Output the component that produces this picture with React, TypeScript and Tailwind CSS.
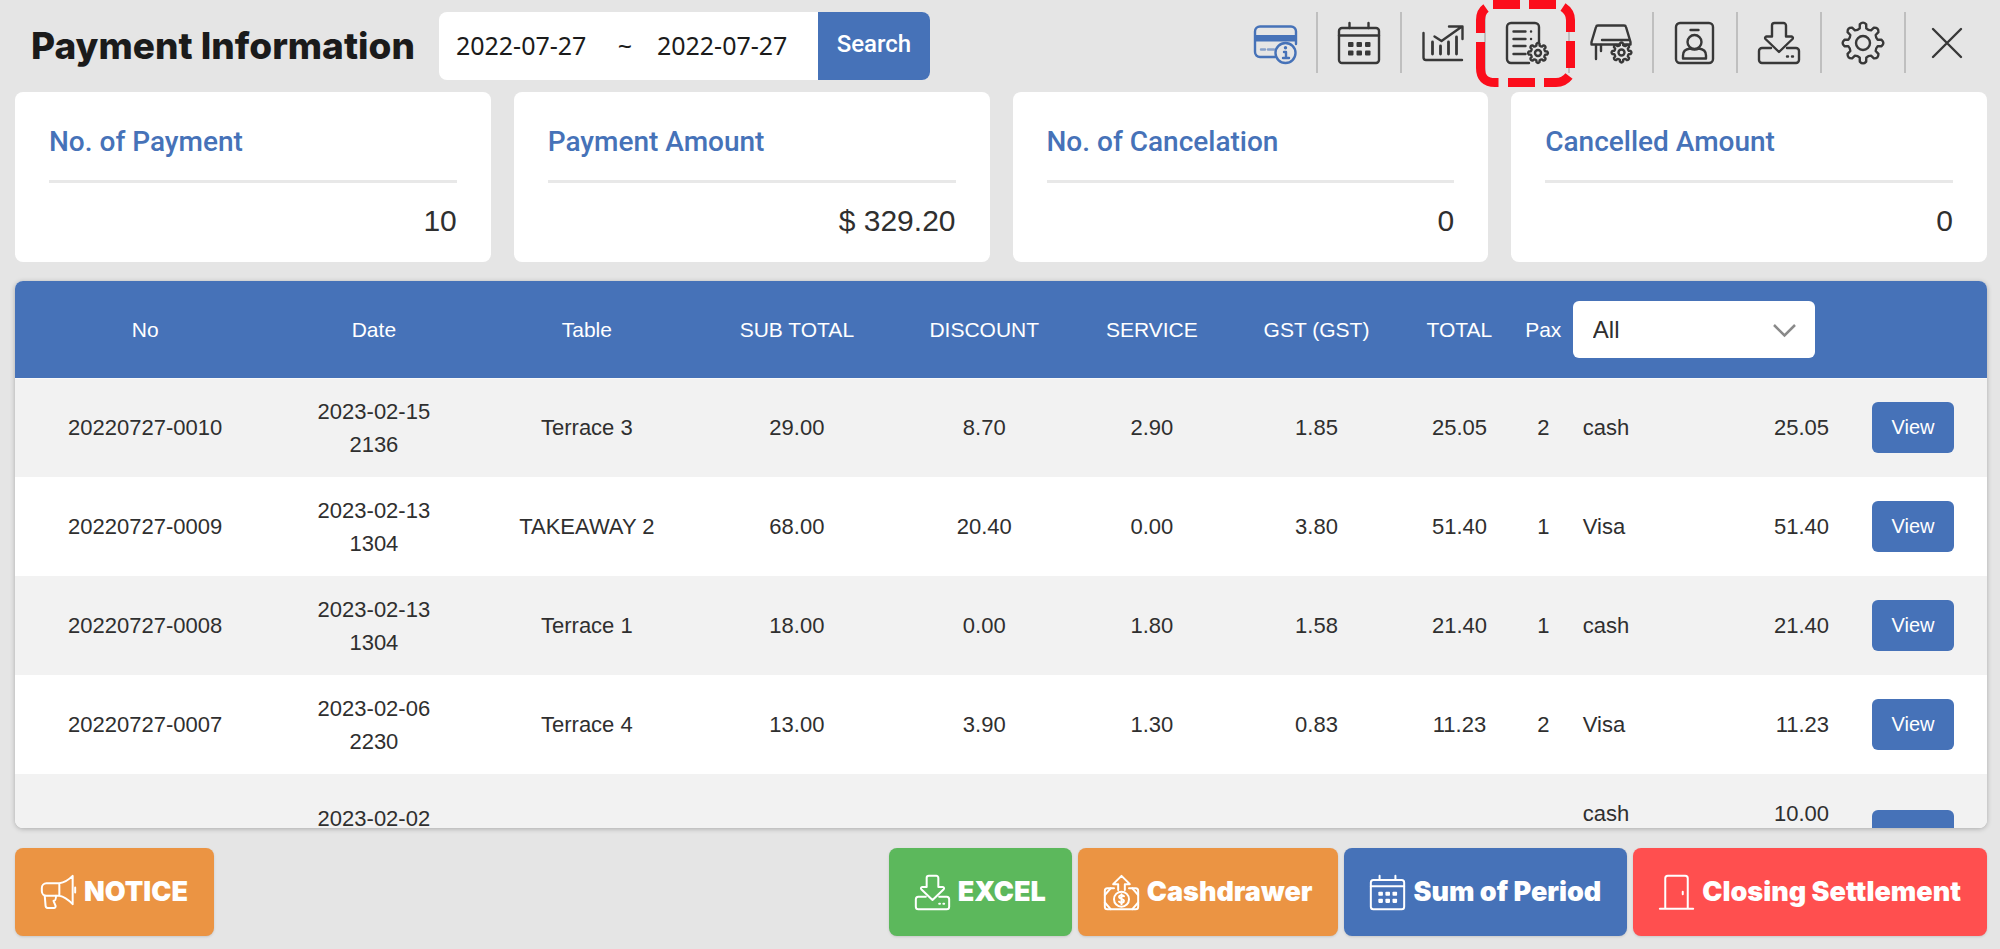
import { useState } from 'react';
import type { ReactNode } from 'react';

interface Payment {
  method: string;
  amount: string;
}

interface Order {
  no: string;
  date: string;
  time: string;
  table: string;
  subTotal: string;
  discount: string;
  service: string;
  gst: string;
  total: string;
  pax: number;
  payments: Payment[];
}

const summary = [
  { label: 'No. of Payment', value: '10' },
  { label: 'Payment Amount', value: '$ 329.20' },
  { label: 'No. of Cancelation', value: '0' },
  { label: 'Cancelled Amount', value: '0' },
];

const orders: Order[] = [
  { no: '20220727-0010', date: '2023-02-15', time: '2136', table: 'Terrace 3', subTotal: '29.00', discount: '8.70', service: '2.90', gst: '1.85', total: '25.05', pax: 2, payments: [{ method: 'cash', amount: '25.05' }] },
  { no: '20220727-0009', date: '2023-02-13', time: '1304', table: 'TAKEAWAY 2', subTotal: '68.00', discount: '20.40', service: '0.00', gst: '3.80', total: '51.40', pax: 1, payments: [{ method: 'Visa', amount: '51.40' }] },
  { no: '20220727-0008', date: '2023-02-13', time: '1304', table: 'Terrace 1', subTotal: '18.00', discount: '0.00', service: '1.80', gst: '1.58', total: '21.40', pax: 1, payments: [{ method: 'cash', amount: '21.40' }] },
  { no: '20220727-0007', date: '2023-02-06', time: '2230', table: 'Terrace 4', subTotal: '13.00', discount: '3.90', service: '1.30', gst: '0.83', total: '11.23', pax: 2, payments: [{ method: 'Visa', amount: '11.23' }] },
  { no: '', date: '2023-02-02', time: '', table: '', subTotal: '', discount: '', service: '', gst: '', total: '', pax: 0, payments: [{ method: 'cash', amount: '10.00' }, { method: '', amount: '' }] },
];

// Outline of a cog with eight rounded teeth
function gearPath(cx: number, cy: number, outer: number, inner: number) {
  const teeth = 8;
  const point = (r: number, a: number) => `${(cx + r * Math.cos(a)).toFixed(2)} ${(cy + r * Math.sin(a)).toFixed(2)}`;
  let d = '';
  for (let i = 0; i < teeth; i++) {
    const a = (i * 2 * Math.PI) / teeth - Math.PI / 2;
    d += `${i === 0 ? 'M' : 'L'}${point(inner, a - 0.22)}`;
    d += `L${point(outer * 0.92, a - 0.17)}`;
    d += `Q${point(outer * 1.08, a)} ${point(outer * 0.92, a + 0.17)}`;
    d += `L${point(inner, a + 0.22)}`;
    d += `Q${point(inner * 0.92, a + Math.PI / teeth)} ${point(inner, a + (2 * Math.PI) / teeth - 0.22)}`;
  }
  return d + 'Z';
}

function Icon({ children, className = 'size-[42px]' }: { children: ReactNode; className?: string }) {
  return (
    <svg
      className={className}
      viewBox="0 0 42 42"
      fill="none"
      stroke="currentColor"
      strokeWidth={2.4}
      strokeLinecap="round"
      strokeLinejoin="round"
      overflow="visible"
      aria-hidden="true"
    >
      {children}
    </svg>
  );
}

function CardIcon() {
  return (
    <Icon>
      <path d="M21 35H6a5 5 0 0 1-5-5V9.500a5 5 0 0 1 5-5h31a5 5 0 0 1 5 5V22" />
      <path d="M1 13h41v6.500H1z" fill="currentColor" stroke="none" />
      <path d="M7 27.500h4M14 27.500h6" strokeOpacity={0.6} />
      <circle cx="31.500" cy="31" r="10" fill="#e5e5e5" />
      <path d="M30 30h2v6M29 36h6" />
      <circle cx="31.500" cy="25.800" r="1.700" fill="currentColor" stroke="none" />
    </Icon>
  );
}

function CalendarIcon({ className }: { className?: string }) {
  return (
    <Icon className={className}>
      <rect x="1" y="6" width="40" height="35" rx="3" />
      <path d="M1 13.500h40M11.500 1v5M30.500 1v5" />
      <g fill="currentColor" stroke="none">
        <rect x="10" y="20" width="5.500" height="5" rx="1" />
        <rect x="18.500" y="20" width="5.500" height="5" rx="1" />
        <rect x="27" y="20" width="5.500" height="5" rx="1" />
        <rect x="10" y="28.500" width="5.500" height="5" rx="1" />
        <rect x="18.500" y="28.500" width="5.500" height="5" rx="1" />
        <rect x="27" y="28.500" width="5.500" height="5" rx="1" />
      </g>
    </Icon>
  );
}

function ChartIcon() {
  return (
    <Icon>
      <path d="M1.500 11v24.500a2.500 2.500 0 0 0 2.500 2.500h36" />
      <path d="M10.500 20v12M18.500 24v8M26.500 20v12M34.500 15v17" strokeWidth={2.8} />
      <path d="M12.500 14.500l7 4.500L40 4.500M27 4.500h13.500V17" />
    </Icon>
  );
}

function ListIcon() {
  return (
    <Icon>
      <path d="M23 41H5a4 4 0 0 1-4-4V5a4 4 0 0 1 4-4h24a4 4 0 0 1 4 4v17" />
      <path d="M7.500 9.500h12M7.500 17h12M7.500 24h12M7.500 32h12M25 9.500h.1M25 17h.1M25 24h.1" />
      <path d={gearPath(32, 31, 10, 7.5)} fill="#e5e5e5" />
      <circle cx="32" cy="31" r="3" />
    </Icon>
  );
}

function TableIcon() {
  return (
    <Icon>
      <path d="M1.500 20L6 5a2 2 0 0 1 2-1.500h26A2 2 0 0 1 36 5l4.500 15v2.500h-39z" />
      <path d="M12 18h27M6 23v14M11 23v6" />
      <path d={gearPath(31.5, 30.5, 10, 7.5)} fill="#e5e5e5" />
      <circle cx="31.500" cy="30.500" r="3" />
    </Icon>
  );
}

function BadgeIcon() {
  return (
    <Icon>
      <rect x="2" y="1" width="37" height="40" rx="4" />
      <path d="M16.500 8h8" />
      <circle cx="20.500" cy="20" r="7" />
      <path d="M9 36.500v-3c0-4 3-6.500 7-7 3 1.500 6 1.500 9 0 4 .5 7 3 7 7v3z" />
    </Icon>
  );
}

function DownloadIcon({ className }: { className?: string }) {
  return (
    <Icon className={className}>
      <path d="M13 26H4a3 3 0 0 0-3 3v9a3 3 0 0 0 3 3h34a3 3 0 0 0 3-3v-9a3 3 0 0 0-3-3h-9" />
      <path d="M14 14.500V3.500A2.500 2.500 0 0 1 16.500 1h9A2.500 2.500 0 0 1 28 3.500v11h5.500a1.500 1.500 0 0 1 1 2.500L21 30 7.500 17a1.500 1.500 0 0 1 1-2.500z" />
      <path d="M29 34.500h1M34 34.500h1" />
    </Icon>
  );
}

function GearIcon() {
  return (
    <Icon>
      <path d={gearPath(21, 21, 20.5, 15)} />
      <circle cx="21" cy="21" r="7" />
    </Icon>
  );
}

function CloseIcon() {
  return (
    <Icon>
      <path d="M7 7l28 28M35 7L7 35" />
    </Icon>
  );
}

function MegaphoneIcon({ className }: { className?: string }) {
  return (
    <Icon className={className}>
      <path d="M22 10H6.500A5.500 5.500 0 0 0 1 15.500v4A5.500 5.500 0 0 0 6.500 25H22zM22 10c6-1 11-4 16-9v34c-5-5-10-9-16-10M41 15v6" />
      <path d="M4.500 25l1 12a2.500 2.500 0 0 0 2.500 2.500h7.500a2 2 0 0 0 2-2.500L15 31c2.500 0 3-1.500 3-6" />
    </Icon>
  );
}

function CashIcon({ className }: { className?: string }) {
  return (
    <Icon className={className}>
      <path d="M12 16H4a3 3 0 0 0-3 3v19a3 3 0 0 0 3 3h34a3 3 0 0 0 3-3V19a3 3 0 0 0-3-3h-8" />
      <path d="M17 18v-7h-6L21 1l10 10h-6v7" />
      <circle cx="21" cy="29" r="9" />
      <path d="M24 25.500c-2-2-6-1.500-6 1s6 2 6 4.500-4 3-6 1M21 23v12M1 24l7-8M41 24l-7-8M1 33l7 8M41 33l-7 8" />
    </Icon>
  );
}

function DoorIcon({ className }: { className?: string }) {
  return (
    <Icon className={className}>
      <path d="M7.500 40V4a3 3 0 0 1 3-3h21a3 3 0 0 1 3 3v36M1 40.500h40M28.500 20v3" />
    </Icon>
  );
}

const tools = [
  { label: 'Payments', icon: <CardIcon />, active: true },
  { label: 'Calendar', icon: <CalendarIcon /> },
  { label: 'Sales chart', icon: <ChartIcon /> },
  { label: 'Order settings', icon: <ListIcon />, highlighted: true },
  { label: 'Table settings', icon: <TableIcon /> },
  { label: 'Staff', icon: <BadgeIcon /> },
  { label: 'Download', icon: <DownloadIcon /> },
  { label: 'Settings', icon: <GearIcon /> },
  { label: 'Close', icon: <CloseIcon /> },
];

function Highlight() {
  return (
    <svg
      className="pointer-events-none absolute -top-3 -left-[10px] z-10 h-[87px] w-[99px]"
      viewBox="0 0 99 87"
      fill="none"
      stroke="#fb0d1b"
      strokeWidth={9}
      aria-hidden="true"
    >
      <path d="M17 4.500H44M53 4.500H80" />
      <path d="M87 7Q94.500 12 94.500 20V32M94.500 41V68" />
      <path d="M93 76Q88 82.500 80 82.500H68M59 82.500H32" />
      <path d="M22.500 82.500H19Q4.500 82.500 4.500 68V42M4.500 33V20Q4.500 12 10 8" />
    </svg>
  );
}

function ActionButton({ color, icon, children }: { color: string; icon: ReactNode; children: ReactNode }) {
  return (
    <button
      type="button"
      className={`flex h-[88px] items-center gap-2 rounded-lg px-[26px] font-[Inter,sans-serif] text-[27px] font-black whitespace-nowrap text-white shadow-sm ${color}`}
    >
      {icon}
      {children}
    </button>
  );
}

export default function App() {
  const [from, setFrom] = useState('2022-07-27');
  const [to, setTo] = useState('2022-07-27');
  const [method, setMethod] = useState('All');

  return (
    <div className="flex h-screen flex-col overflow-hidden bg-[#e5e5e5] pr-[13px] pb-[13px] pl-[15px] font-['Liberation_Sans',Arial,sans-serif] text-[#2f2f2f]">
      <header className="flex h-[92px] shrink-0 items-start justify-between pt-3">
        <div className="flex h-[68px] items-center">
          <h1 className="mr-6 pl-4 font-[Inter,sans-serif] text-[37px] font-extrabold whitespace-nowrap text-[#1b1b1b]">
            Payment Information
          </h1>
          <form className="flex h-full overflow-hidden rounded-lg bg-white" onSubmit={(e) => e.preventDefault()}>
            <div className="flex items-center pl-[17px] font-['Noto_Sans',sans-serif] text-[25px] text-[#1b1b1b]">
              <input aria-label="From" className="w-[137px] outline-none" value={from} onChange={(e) => setFrom(e.target.value)} />
              <span className="w-16 text-center">~</span>
              <input aria-label="To" className="w-[161px] outline-none" value={to} onChange={(e) => setTo(e.target.value)} />
            </div>
            <button type="submit" className="w-[112px] bg-[#4672b8] pb-1 font-[Roboto,sans-serif] text-[24px] font-medium text-white">
              Search
            </button>
          </form>
        </div>
        <nav className="-mr-px flex">
          {tools.map((tool) => (
            <div key={tool.label} className="relative border-l-2 border-[#bfbfbf] first:border-transparent">
              <button
                type="button"
                aria-label={tool.label}
                className={`flex h-[61px] w-[82px] items-center justify-center ${tool.active ? 'text-[#4672b8]' : 'text-[#383838]'}`}
              >
                {tool.icon}
              </button>
              {tool.highlighted && <Highlight />}
            </div>
          ))}
        </nav>
      </header>

      <section className="grid shrink-0 grid-cols-4 gap-[23px]">
        {summary.map((card) => (
          <div key={card.label} className="h-[170px] rounded-lg bg-white px-[34px] pt-[26px]">
            <h2 className="h-[65px] border-b-3 border-[#e8e8e8] font-[Roboto,sans-serif] text-[28px] leading-[48px] font-medium text-[#4672b8]">
              {card.label}
            </h2>
            <p className="pt-[14px] text-right text-[30px] leading-[48px]">{card.value}</p>
          </div>
        ))}
      </section>

      <main className="mt-[19px] min-h-0 flex-1 overflow-hidden rounded-lg bg-white shadow-[0_1px_5px_rgba(0,0,0,0.25)]">
        <table className="w-full table-fixed text-center text-[22px] leading-[33px]">
          <colgroup>
            <col className="w-[13.2%]" />
            <col className="w-[10%]" />
            <col className="w-[11.6%]" />
            <col className="w-[9.7%]" />
            <col className="w-[9.3%]" />
            <col className="w-[7.7%]" />
            <col className="w-[9%]" />
            <col className="w-[5.5%]" />
            <col className="w-[3%]" />
            <col className="w-[13.5%]" />
            <col className="w-[7.5%]" />
          </colgroup>
          <thead className="bg-[#4672b8] text-[21px] text-white">
            <tr className="h-[97px] border-b border-[#f9f9f9]">
              <th className="font-normal">No</th>
              <th className="font-normal">Date</th>
              <th className="font-normal">Table</th>
              <th className="font-normal">SUB TOTAL</th>
              <th className="font-normal">DISCOUNT</th>
              <th className="font-normal">SERVICE</th>
              <th className="font-normal">GST (GST)</th>
              <th className="font-normal">TOTAL</th>
              <th className="font-normal">Pax</th>
              <th className="font-normal">
                <div className="relative mr-6">
                  <select
                    aria-label="Payment method"
                    className="h-[57px] w-full appearance-none rounded-md bg-white px-5 text-[24px] text-[#2f2f2f]"
                    value={method}
                    onChange={(e) => setMethod(e.target.value)}
                  >
                    <option>All</option>
                    <option>cash</option>
                    <option>Visa</option>
                  </select>
                  <svg
                    className="pointer-events-none absolute top-[22px] right-[18px] h-[15px] w-[25px] text-[#8a8a8a]"
                    fill="none"
                    stroke="currentColor"
                    viewBox="0 0 25 15"
                  >
                    <path strokeWidth={2.5} d="M2 2l10.500 10.500L23 2" />
                  </svg>
                </div>
              </th>
              <th aria-label="Actions" />
            </tr>
          </thead>
          <tbody>
            {orders.map((order, index) => (
              <tr key={index} className="h-[99px] odd:bg-[#f2f2f2] even:bg-white">
                <td>{order.no}</td>
                <td>
                  {order.date}
                  <br />
                  {order.time || '\u00a0'}
                </td>
                <td>{order.table}</td>
                <td>{order.subTotal}</td>
                <td>{order.discount}</td>
                <td>{order.service}</td>
                <td>{order.gst}</td>
                <td>{order.total}</td>
                <td>{order.pax || ''}</td>
                <td className="px-[10px] py-[17px]">
                  {order.payments.map((payment, i) => (
                    <div key={i} className="flex h-11 items-center justify-between">
                      <span>{payment.method}</span>
                      <span>{payment.amount}</span>
                    </div>
                  ))}
                </td>
                <td>
                  <button
                    type="button"
                    aria-label="View"
                    className="h-[51px] w-[82px] rounded-md bg-[#4672b8] align-middle text-[20px] text-white"
                  >
                    {order.no && 'View'}
                  </button>
                </td>
              </tr>
            ))}
          </tbody>
        </table>
      </main>

      <footer className="mt-5 flex shrink-0 justify-between">
        <ActionButton color="bg-[#eb9443]" icon={<MegaphoneIcon className="size-[35px]" />}>NOTICE</ActionButton>
        <div className="flex gap-[6px]">
          <ActionButton color="bg-[#5cb85c]" icon={<DownloadIcon className="size-[35px]" />}>EXCEL</ActionButton>
          <ActionButton color="bg-[#eb9443]" icon={<CashIcon className="size-[35px]" />}>Cashdrawer</ActionButton>
          <ActionButton color="bg-[#4672b8]" icon={<CalendarIcon className="size-[35px]" />}>Sum of Period</ActionButton>
          <ActionButton color="bg-[#ff4f4f]" icon={<DoorIcon className="size-[35px]" />}>Closing Settlement</ActionButton>
        </div>
      </footer>
    </div>
  );
}
